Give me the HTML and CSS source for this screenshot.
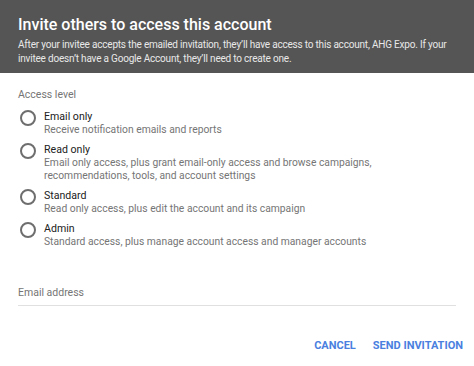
FILE: index.html
```html
<!DOCTYPE html>
<html>
<head>
<meta charset="utf-8">
<link rel="stylesheet" href="styles.css">
</head>
<body>
<div class="dialog">
  <div class="header">
    <div class="title">Invite others to access this account</div>
    <div class="subtitle">After your invitee accepts the emailed invitation, they’ll have access to this account, AHG Expo. If your invitee doesn’t have a Google Account, they’ll need to create one.</div>
  </div>
  <div class="content">
    <div class="section-label">Access level</div>
    <div class="options">
      <div class="option">
        <span class="radio"></span>
        <div class="option-text">
          <div class="option-label">Email only</div>
          <div class="option-desc">Receive notification emails and reports</div>
        </div>
      </div>
      <div class="option">
        <span class="radio"></span>
        <div class="option-text">
          <div class="option-label">Read only</div>
          <div class="option-desc">Email only access, plus grant email-only access and browse campaigns,<br>recommendations, tools, and account settings</div>
        </div>
      </div>
      <div class="option">
        <span class="radio"></span>
        <div class="option-text">
          <div class="option-label">Standard</div>
          <div class="option-desc">Read only access, plus edit the account and its campaign</div>
        </div>
      </div>
      <div class="option">
        <span class="radio"></span>
        <div class="option-text">
          <div class="option-label">Admin</div>
          <div class="option-desc">Standard access, plus manage account access and manager accounts</div>
        </div>
      </div>
    </div>
    <div class="field">
      <span class="placeholder">Email address</span>
    </div>
  </div>
  <div class="actions">
    <span class="btn">CANCEL</span>
    <span class="btn">SEND INVITATION</span>
  </div>
</div>
</body>
</html>
```
FILE: styles.css
```css
html, body {
  margin: 0;
  padding: 0;
  background: #ffffff;
}
body {
  font-family: Roboto, "Noto Sans", Arial, sans-serif;
  width: 474px;
  height: 366px;
  overflow: hidden;
}
.header {
  background: #555555;
  padding: 14px 18px 7px 18px;
}
.title {
  color: #ffffff;
  font-size: 16px;
  font-weight: 500;
  line-height: 22px;
}
.subtitle {
  color: #e8e8e8;
  font-size: 10px;
  letter-spacing: -0.2px;
  line-height: 14px;
  margin-top: 2px;
}
.content {
  padding: 15px 18px 0 18px;
}
.section-label {
  color: #757575;
  font-size: 10.5px;
  line-height: 13px;
}
.options {
  display: flex;
  flex-direction: column;
  gap: 7px;
  margin-top: 9px;
}
.option {
  display: flex;
  align-items: flex-start;
  gap: 8px;
  padding-left: 2px;
}
.radio {
  flex: none;
  width: 12px;
  height: 12px;
  border: 2px solid #6e6e6e;
  border-radius: 50%;
}
.option-text {
  font-size: 10.3px;
  line-height: 13px;
}
.option-label {
  color: #212121;
  font-size: 10.6px;
}
.option-desc {
  color: #757575;
}
.field {
  margin-top: 38px;
  padding-bottom: 6px;
  border-bottom: 1px solid #e0e0e0;
  font-size: 10.5px;
  line-height: 13px;
}
.placeholder {
  color: #757575;
}
.actions {
  display: flex;
  justify-content: flex-end;
  gap: 17px;
  padding: 33px 11px 0 0;
}
.btn {
  color: #4a7fe0;
  font-size: 11px;
  line-height: 14px;
  font-weight: 700;
}
```
